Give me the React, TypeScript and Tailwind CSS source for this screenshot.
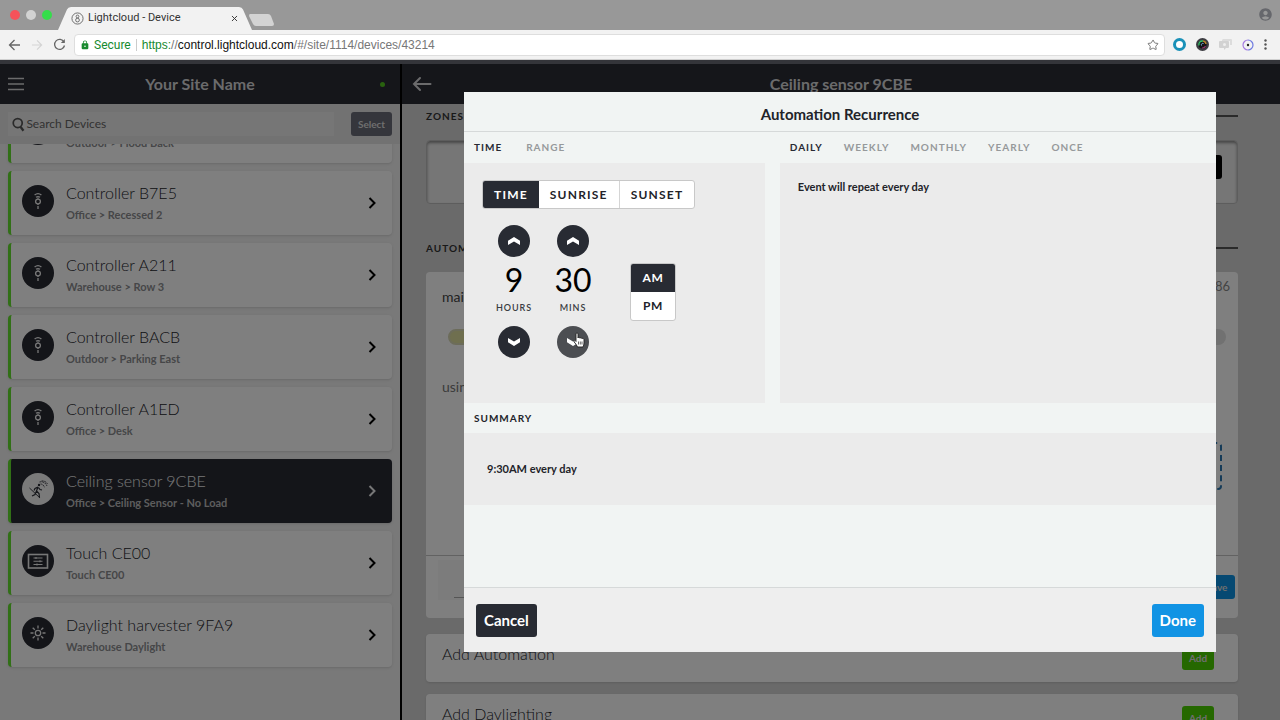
import type { ReactNode } from 'react';
import clsx from 'clsx';
import { Star, X } from 'lucide-react';
import { MdAccountCircle, MdLock } from 'react-icons/md';

type IconName = 'controller' | 'motion' | 'touch' | 'sun';

interface Device {
  name: string;
  location: string;
  icon: IconName;
  selected?: boolean;
}

const DEVICES: Device[] = [
  { name: 'Controller', location: 'Outdoor > Flood Back', icon: 'controller' },
  { name: 'Controller B7E5', location: 'Office > Recessed 2', icon: 'controller' },
  { name: 'Controller A211', location: 'Warehouse > Row 3', icon: 'controller' },
  { name: 'Controller BACB', location: 'Outdoor > Parking East', icon: 'controller' },
  { name: 'Controller A1ED', location: 'Office > Desk', icon: 'controller' },
  { name: 'Ceiling sensor 9CBE', location: 'Office > Ceiling Sensor - No Load', icon: 'motion', selected: true },
  { name: 'Touch CE00', location: 'Touch CE00', icon: 'touch' },
  { name: 'Daylight harvester 9FA9', location: 'Warehouse Daylight', icon: 'sun' },
];

function DeviceIcon({ name }: { name: IconName }) {
  return (
    <svg viewBox="0 0 32 32" className="h-8 w-8" fill="none" stroke="currentColor" strokeWidth="1.3" aria-hidden="true">
      {name === 'controller' && (
        <>
          <circle cx="16" cy="16.5" r="2.4" />
          <path d="M16 12.8v1M16 19v1M12.6 10c2-1.6 4.8-1.6 6.8 0M14 12.3c1.200-.9 2.800-.9 4 0M16 21v3" />
        </>
      )}
      {name === 'motion' && (
        <>
          <circle cx="17" cy="12" r="1.200" fill="currentColor" stroke="none" />
          <path d="M16 14l-1.500 4 2.500 2.500.5 4M14.500 18l-1.500 3.500-3 1.500M16 14l-3 1.500-1 2M16.500 14.500l1.500 2 2 .5" strokeWidth="1.200" />
          <path d="M7.500 15l10.500 10" strokeWidth="0.900" />
          <path d="M17.500 9c3-1 6 .5 7.500 4M19.500 8c2.500-.5 5 1 6 3M18.500 11c2 0 3.500 1.500 4 3.500" strokeWidth="0.800" strokeDasharray="2 0.700" />
        </>
      )}
      {name === 'touch' && (
        <>
          <rect x="6.500" y="9.500" width="19" height="13.500" strokeWidth="1.600" />
          <path d="M11.500 13h9M11.500 16.300h9M11.500 19.500h9M14 12v2M18 15.300v2M15 18.500v2" strokeWidth="1.100" />
        </>
      )}
      {name === 'sun' && (
        <>
          <circle cx="16" cy="16" r="2.700" />
          <path d="M16 8.500v3M16 20.500v3M8.500 16h3M20.500 16h3M10.700 10.700l2.100 2.100M19.200 19.200l2.100 2.100M10.700 21.300l2.100-2.100M19.200 12.800l2.100-2.100" />
        </>
      )}
    </svg>
  );
}

function ChromeBar() {
  return (
    <header className="shrink-0 font-[Roboto,sans-serif]">
      <div className="flex h-[30px] items-end bg-[#989898]">
        <div className="flex h-full items-center gap-[6px] pl-[10px]">
          <span className="h-[10px] w-[10px] rounded-full bg-[#f5525a]" />
          <span className="h-[10px] w-[10px] rounded-full bg-[#d2d2d2]" />
          <span className="h-[10px] w-[10px] rounded-full bg-[#35dd4b]" />
        </div>
        <div className="relative ml-[6px] h-[23px] w-[194px]">
          <svg className="absolute inset-0 h-full w-full" viewBox="0 0 194 23" preserveAspectRatio="none" aria-hidden="true">
            <path d="M0 23L9 2.500Q10 0 13 0H181Q184 0 185 2.500L194 23Z" fill="#f2f2f2" />
          </svg>
          <div className="relative flex h-full items-center px-[13px] text-[11px] text-[#333]">
            <svg viewBox="0 0 14 14" className="mr-1 h-[13px] w-[13px]" fill="none" stroke="#666" aria-hidden="true">
              <circle cx="7" cy="7" r="6" />
              <circle cx="7" cy="4.800" r="1.500" />
              <circle cx="7" cy="8.700" r="2" />
            </svg>
            <span>Lightcloud - Device</span>
            <button aria-label="Close tab" className="ml-auto">
              <X size={9} strokeWidth={2.5} />
            </button>
          </div>
        </div>
        <button aria-label="New tab" className="-ml-[3px] mb-1">
          <svg width="26" height="12" viewBox="0 0 26 12" aria-hidden="true">
            <path d="M1 0H19Q21 0 22 2L25 10Q25 12 23 12H7Q5 12 4 10L0 2Q0 0 1 0Z" fill="#d3d3d3" />
          </svg>
        </button>
        <MdAccountCircle size={15} className="mb-2 ml-auto mr-[7px] text-[#66676c]" />
      </div>

      <div className="flex h-[30px] items-center border-b border-[#cfcfcf] bg-[#f2f2f2] text-[#5a5a5a]">
        <button aria-label="Back" className="ml-2">
          <svg width="13" height="12" viewBox="0 0 13 12" fill="none" stroke="#666" strokeWidth="1.300" aria-hidden="true">
            <path d="M12 6H2M6.500 1L1.500 6l5 5" />
          </svg>
        </button>
        <button aria-label="Forward" className="ml-[10px]">
          <svg width="12" height="12" viewBox="0 0 13 12" fill="none" stroke="#d4d4d4" strokeWidth="1.300" aria-hidden="true">
            <path d="M1 6h10M6.500 1l5 5-5 5" />
          </svg>
        </button>
        <button aria-label="Reload" className="ml-[10px]">
          <svg width="13" height="13" viewBox="0 0 13 13" fill="none" stroke="#666" strokeWidth="1.300" aria-hidden="true">
            <path d="M11 4A5 5 0 1 0 11.500 7.500" />
            <path d="M11.800 1v4h-4z" fill="#666" stroke="none" />
          </svg>
        </button>
        <div className="ml-2 flex h-[22px] flex-1 items-center rounded-sm border border-[#dedede] bg-white px-[5px] text-[#777]">
          <MdLock size={10} className="text-[#178a2e]" />
          <span className="ml-1 text-[12px] text-[#178a2e]">Secure</span>
          <span className="mx-[5px] h-3 w-px bg-[#ccc]" />
          <span className="font-[Liberation_Sans,sans-serif] text-[12px]">
            <span className="text-[#178a2e]">https:</span>//<span className="text-[#111]">control.lightcloud.com</span>
            /#/site/1114/devices/43214
          </span>
          <button aria-label="Bookmark" className="ml-auto">
            <Star size={12} />
          </button>
        </div>
        <div className="flex items-center gap-[10px] pl-2 pr-[13px]">
          <span className="h-[13px] w-[13px] rounded-full border-[3px] border-[#1a91b8] bg-white" />
          <svg width="13" height="13" viewBox="0 0 13 13" fill="none" aria-hidden="true">
            <circle cx="6.500" cy="6.500" r="6.500" fill="#3d3d42" />
            <circle cx="6.500" cy="6.500" r="4" fill="#151515" />
            <path d="M3 7.500A3.500 3.500 0 0 1 7 3" stroke="#35c26b" strokeWidth="1.400" />
            <path d="M7 3A3.500 3.500 0 0 1 10 6" stroke="#b8862f" strokeWidth="1.400" />
            <path d="M5.500 7.500a1.500 1.500 0 0 1 2-2" stroke="#7fb3e8" />
            <path d="M9.500 8A3.500 3.500 0 0 1 6 10" stroke="#9a356f" strokeWidth="1.200" />
          </svg>
          <svg width="13" height="11" viewBox="0 0 13 11" aria-hidden="true">
            <path d="M4 0h8q1 0 1 1v5h-2V2H3V1z" fill="#dcdcdc" />
            <path d="M1 2h8q1 0 1 1v5q0 1-1 1H7l-2 2V9H1Q0 9 0 8V3q0-1 1-1z" fill="#d2d2d2" />
            <circle cx="5.500" cy="5.500" r="1.500" fill="#efefef" />
          </svg>
          <svg width="12" height="12" viewBox="0 0 12 12" fill="none" aria-hidden="true">
            <path d="M6 1A5 5 0 0 0 6 11" stroke="#a57be0" strokeWidth="1.200" />
            <path d="M6 1A5 5 0 0 1 6 11" stroke="#6f7be0" strokeWidth="1.200" />
            <circle cx="6" cy="6" r="1.200" fill="#222" />
          </svg>
          <svg width="3" height="11" viewBox="0 0 3 11" fill="#555" aria-hidden="true">
            <circle cx="1.500" cy="1.500" r="1.200" />
            <circle cx="1.500" cy="5.500" r="1.200" />
            <circle cx="1.500" cy="9.500" r="1.200" />
          </svg>
        </div>
      </div>
      <div className="h-1 bg-[#34353a]" />
    </header>
  );
}

function DeviceRow({ device }: { device: Device }) {
  return (
    <li>
      <a
        href="#device"
        className={clsx(
          'flex h-16 items-center rounded border-l-3 border-[#63e02c] pl-[11px] pr-4 shadow-sm',
          device.selected ? 'bg-[#282a33] text-[#eee]' : 'bg-white text-[#22232a]',
        )}
      >
        <span
          className={clsx(
            'mb-1 shrink-0 rounded-full',
            device.selected ? 'bg-[#f4f4f4] text-[#282a33]' : 'bg-[#282a33] text-[#eee]',
          )}
        >
          <DeviceIcon name={device.icon} />
        </span>
        <span className="ml-3 flex flex-1 flex-col gap-1 pb-px">
          <span className="text-[16px] font-light leading-5">{device.name}</span>
          <span className={clsx('text-[11px] font-bold leading-4', device.selected ? 'text-[#bbb]' : 'text-[#8c8d90]')}>
            {device.location}
          </span>
        </span>
        <svg
          width="8"
          height="12"
          viewBox="0 0 8 12"
          fill="none"
          stroke={device.selected ? '#eee' : '#000'}
          strokeWidth="2"
          aria-hidden="true"
        >
          <path d="M1.500 1L6.500 6l-5 5" />
        </svg>
      </a>
    </li>
  );
}

function Sidebar() {
  return (
    <aside className="flex w-[400px] shrink-0 flex-col bg-[#f2f2f2]">
      <div className="flex h-10 shrink-0 items-center bg-[#2a2c35] px-2 text-[#d6d6d8]">
        <button aria-label="Menu">
          <svg width="16" height="14" viewBox="0 0 16 14" stroke="currentColor" strokeWidth="1.500" aria-hidden="true">
            <path d="M0 1.500h16M0 7h16M0 12.500h16" />
          </svg>
        </button>
        <h1 className="flex-1 pr-1 text-center text-[16px] font-bold">Your Site Name</h1>
        <span className="mr-[7px] h-[5px] w-[5px] rounded-full bg-[#52c41f]" />
      </div>
      <div className="flex h-10 shrink-0 items-center justify-between bg-[#e4e4e4] px-2">
        <label className="flex h-6 w-[326px] items-center gap-px bg-[#ededed] pl-1 text-[#555]">
          <svg width="14" height="15" viewBox="0 0 14 15" fill="none" stroke="currentColor" strokeWidth="1.800" aria-hidden="true">
            <circle cx="6" cy="6" r="4.700" />
            <path d="M9 10l3 4" strokeWidth="2.500" />
          </svg>
          <input
            type="search"
            aria-label="Search Devices"
            placeholder="Search Devices"
            className="h-6 w-full bg-transparent text-[12px] leading-6 outline-none placeholder:text-[#666]"
          />
        </label>
        <button className="h-6 w-[41px] rounded-[3px] bg-[#6a6c78] text-[10px] font-bold text-[#ddd]">Select</button>
      </div>
      <nav className="min-h-0 flex-1 overflow-hidden px-2">
        <ul className="-mt-[45px] flex flex-col gap-2">
          {DEVICES.map((device) => (
            <DeviceRow key={device.name} device={device} />
          ))}
        </ul>
      </nav>
    </aside>
  );
}

function SectionTitle({ children }: { children: ReactNode }) {
  return (
    <h3 className="flex h-6 items-center gap-3 text-[10px] font-bold tracking-widest text-[#333]">
      {children}
      <span className="h-[2px] flex-1 bg-[#555]" />
    </h3>
  );
}

function AddCard({ title }: { title: string }) {
  return (
    <section className="flex h-12 shrink-0 items-center justify-between rounded bg-white pl-4 pr-6 shadow">
      <h3 className="mb-2 text-[16px] font-light text-[#22232a]">{title}</h3>
      <button className="h-6 w-8 rounded-[3px] bg-[#4bd000] text-[10px] font-bold text-[#ddd]">Add</button>
    </section>
  );
}

function DevicePane() {
  return (
    <main className="flex min-w-0 flex-1 flex-col overflow-hidden border-l-2 border-black bg-[#d5d5d5]">
      <div className="flex h-10 shrink-0 items-center bg-[#2a2c35] px-[10px] text-[#d6d6d8]">
        <button aria-label="Back to devices">
          <svg width="20" height="16" viewBox="0 0 20 16" fill="none" stroke="currentColor" strokeWidth="2" strokeLinecap="round" aria-hidden="true">
            <path d="M18.500 8H2M8 2L2 8l6 6" />
          </svg>
        </button>
        <h2 className="mr-5 flex-1 text-center text-[16px] font-bold">Ceiling sensor 9CBE</h2>
      </div>
      <div className="flex flex-col pl-6 pr-[42px]">
        <SectionTitle>ZONES</SectionTitle>
        <div className="mt-3 flex h-16 justify-end rounded border border-[#bbb] bg-[#ececec] pr-[15px] pt-[14px] shadow-[inset_0_2px_3px_rgba(0,0,0,0.4)]">
          <span className="h-6 w-12 rounded-[3px] bg-black" />
        </div>
        <div className="mt-8">
          <SectionTitle>AUTOMATIONS</SectionTitle>
        </div>
        <section className="mt-3 flex h-[346px] flex-col rounded bg-white">
          <div className="flex flex-1 flex-col px-4">
            <div className="flex justify-between pt-1">
              <span className="mt-[11px] text-[14px] leading-5 text-[#444]">main</span>
              <span className="-mr-2 text-[13px] leading-5 text-[#888]">86</span>
            </div>
            <div className="ml-[6px] mt-[22px] flex h-4 justify-between">
              <span className="w-16 rounded-full border-2 border-[#d8d8b4] bg-[#dede9e]" />
              <span className="-mr-1 w-16 rounded-full bg-[#e2e2e2]" />
            </div>
            <span className="mt-8 text-[14px] leading-5 text-[#777]">using</span>
            <span className="mt-[45px] h-12 w-24 self-end rounded border-2 border-dashed border-[#2a76b0]" />
          </div>
          <div className="flex h-[63px] items-start justify-between border-t border-[#c4c4c4] pl-3 pr-[3px]">
            <div className="mt-1 flex h-10 w-24 items-end bg-[#f9f9f9] pl-4">
              <span className="mb-[2px] h-px w-full bg-[#aaa]" />
            </div>
            <button className="mt-[19px] h-6 w-9 rounded-[3px] bg-[#0c93e4] text-[10px] font-bold text-[#ddd]">Save</button>
          </div>
        </section>
        <div className="mt-4 flex flex-col gap-3">
          <AddCard title="Add Automation" />
          <AddCard title="Add Daylighting" />
        </div>
      </div>
    </main>
  );
}

function Tabs({ items, className }: { items: string[]; className: string }) {
  return (
    <div role="tablist" className={clsx('flex h-[31px] items-center px-[10px] text-[10px] font-bold', className)}>
      {items.map((item, index) => (
        <button
          key={item}
          role="tab"
          aria-selected={index === 0}
          className={clsx('tracking-widest', index === 0 ? 'text-[#282a33]' : 'text-[#96999b]')}
        >
          {item}
        </button>
      ))}
    </div>
  );
}

function RoundButton({ label, down, hovered }: { label: string; down?: boolean; hovered?: boolean }) {
  return (
    <button
      aria-label={label}
      className={clsx('grid h-8 w-8 place-items-center rounded-full', hovered ? 'bg-[#4c4e52]' : 'bg-[#282b33]')}
    >
      <svg width="12" height="8" viewBox="0 0 12 8" fill="#fff" aria-hidden="true">
        <path d={down ? 'M0 0L6 3.500 12 0V4.200L6 8 0 4.200Z' : 'M0 8L6 4.500 12 8V3.800L6 0 0 3.800Z'} />
      </svg>
    </button>
  );
}

function Stepper({ value, unit, hovered }: { value: string; unit: string; hovered?: boolean }) {
  return (
    <div className="relative flex w-9 flex-col items-center">
      <RoundButton label={`More ${unit}`} />
      <span className="mt-[3px] text-[32px] leading-10 text-black">{value}</span>
      <span className="mb-3 mt-[2px] text-[9px] font-semibold leading-3 tracking-widest text-[#3a3c42]">{unit}</span>
      <RoundButton label={`Fewer ${unit}`} down hovered={hovered} />
      {hovered && (
        <svg className="absolute bottom-[10px] left-[18px] h-4 w-3" viewBox="0 0 12 16" fill="#fff" stroke="#222" strokeWidth="0.900" aria-hidden="true">
          <path d="M3 8.500V2Q3 1 4 1T5 2V6Q5 5.300 6 5.300T7 6.200Q7.200 5.600 8 5.700T9 6.700Q9.300 6.200 10 6.400T11 7.400V11Q11 13 10 15H4.500Q3.500 12.500 1.200 10Q.5 8.700 1.500 8.300T3 9.500Z" />
          <path d="M5.500 9.500v3M7.300 9.500v3M9 9.500v3" strokeWidth="0.700" />
        </svg>
      )}
    </div>
  );
}

function RecurrenceDialog() {
  return (
    <div className="absolute inset-0 flex bg-black/50 pb-[68px] pl-[464px] pr-16 pt-7">
      <div role="dialog" aria-labelledby="recurrence-title" className="flex min-w-0 flex-1 flex-col bg-[#f1f4f3] text-[#222329]">
        <h2 id="recurrence-title" className="h-10 border-b border-[#d6d9d9] pt-[2px] text-center text-[15px] font-bold leading-10">
          Automation Recurrence
        </h2>
        <div className="flex gap-[15px]">
          <section className="w-2/5">
            <Tabs items={['TIME', 'RANGE']} className="gap-6" />
            <div className="flex h-60 flex-col items-start bg-[#ebebeb] px-[18px] pt-[17px]">
              <div className="flex h-[29px] overflow-hidden rounded-[3px] border border-[#c8c8c8] bg-white text-[12px] font-bold tracking-widest">
                <button aria-pressed="true" className="bg-[#282b33] px-[11px] text-white">TIME</button>
                <button className="border-r border-[#d5d5d5] px-[11px]">SUNRISE</button>
                <button className="px-[11px]">SUNSET</button>
              </div>
              <div className="mt-4 flex items-center pl-[14px]">
                <Stepper value="9" unit="HOURS" />
                <div className="ml-[23px]">
                  <Stepper value="30" unit="MINS" hovered />
                </div>
                <div className="ml-[39px] flex w-[46px] flex-col overflow-hidden rounded-[3px] border border-[#c8c8c8] bg-white text-[12px] font-bold tracking-wider">
                  <button aria-pressed="true" className="h-7 bg-[#282b33] text-white">AM</button>
                  <button className="h-7">PM</button>
                </div>
              </div>
            </div>
          </section>
          <section className="flex-1">
            <Tabs items={['DAILY', 'WEEKLY', 'MONTHLY', 'YEARLY', 'ONCE']} className="gap-[21px]" />
            <div className="h-60 bg-[#ebebeb] px-[18px] py-4 text-[11px] font-bold leading-4">Event will repeat every day</div>
          </section>
        </div>
        <h3 className="px-[10px] text-[10px] font-bold leading-[30px] tracking-widest">SUMMARY</h3>
        <p className="bg-[#ebebeb] px-[23px] text-[11px] font-bold leading-[72px]">9:30AM every day</p>
        <footer className="mt-auto flex h-[65px] items-center justify-between border-t border-[#d6d9d9] bg-[#eee] px-3 text-[15px] font-bold text-white">
          <button className="h-[33px] rounded-[3px] bg-[#282b33] px-2">Cancel</button>
          <button className="h-[33px] rounded-[3px] bg-[#1193e4] px-2">Done</button>
        </footer>
      </div>
    </div>
  );
}

export default function App() {
  return (
    <div className="flex h-screen flex-col overflow-hidden font-[Lato,sans-serif]">
      <ChromeBar />
      <div className="relative flex min-h-0 flex-1">
        <Sidebar />
        <DevicePane />
        <RecurrenceDialog />
      </div>
    </div>
  );
}
